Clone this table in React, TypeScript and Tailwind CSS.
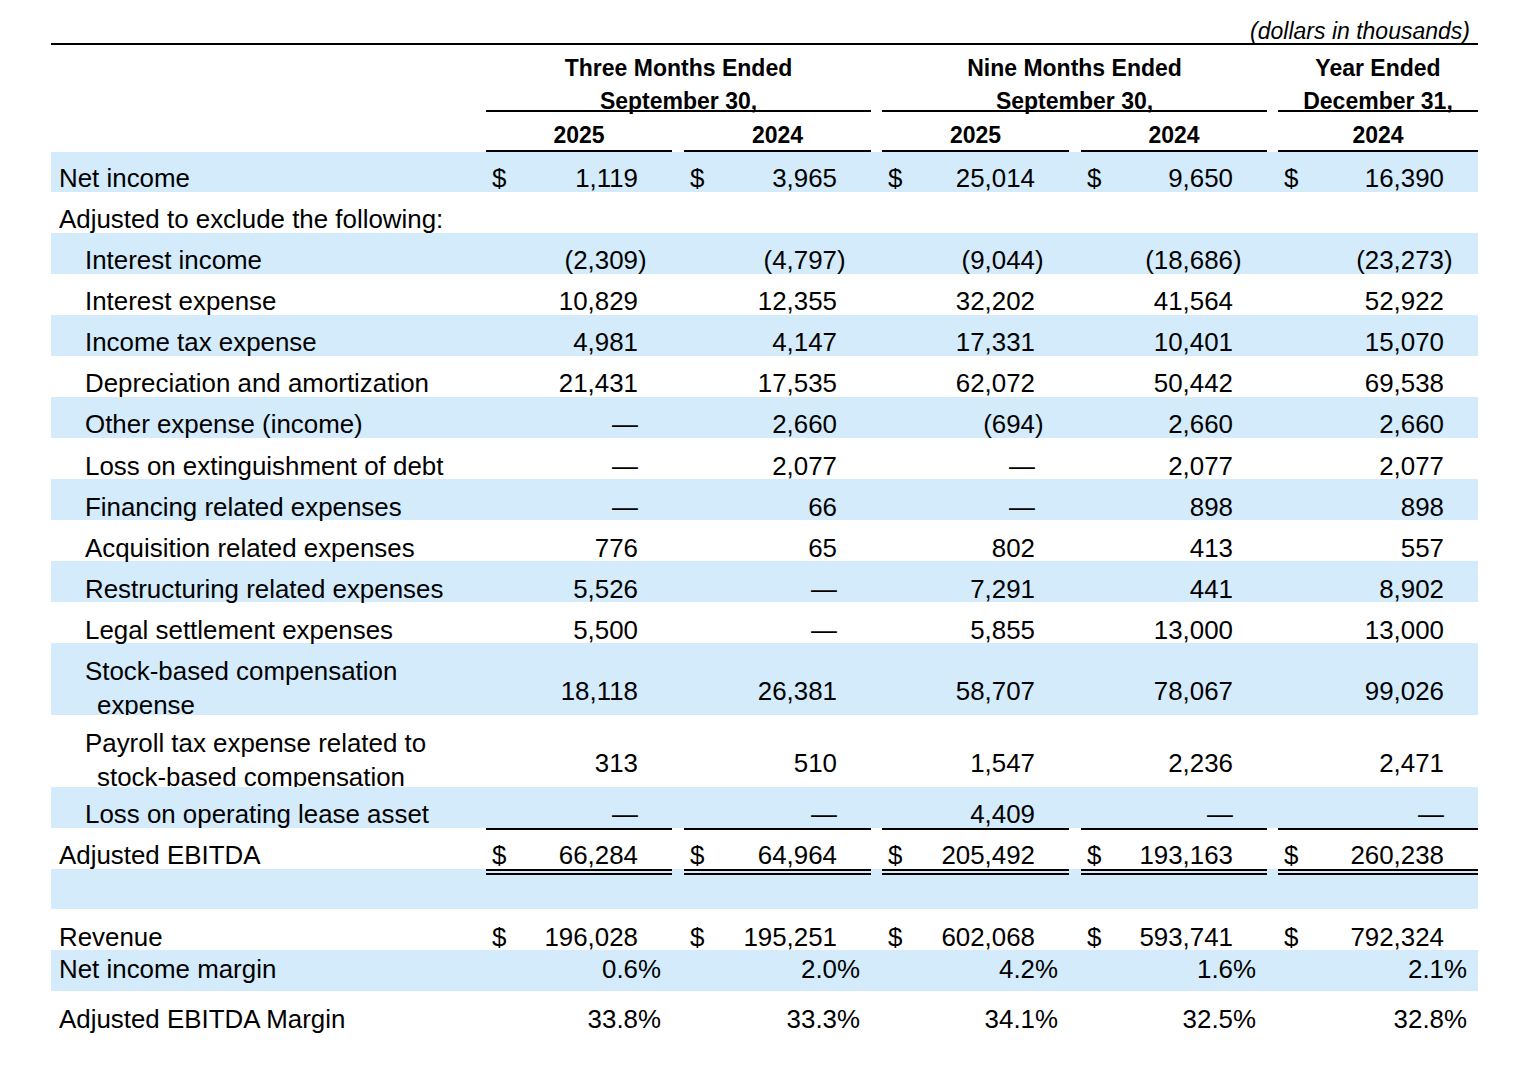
import { Fragment } from "react";

const COLS =
  "grid grid-cols-[435px_186px_12px_187px_11px_187px_12px_186px_11px_200px]";

type Row = {
  label: string[];
  indent?: boolean;
  vals?: string[];
  dollar?: boolean;
  blue?: boolean;
  h: string;
  pb: string;
  valBorder?: string;
};

const rows: Row[] = [
  { label: ["Net income"], vals: ["1,119", "3,965", "25,014", "9,650", "16,390"], dollar: true, blue: true, h: "h-[40px]", pb: "pb-[2px]" },
  { label: ["Adjusted to exclude the following:"], h: "h-[41px]", pb: "pb-[2px]" },
  { label: ["Interest income"], indent: true, vals: ["(2,309)", "(4,797)", "(9,044)", "(18,686)", "(23,273)"], blue: true, h: "h-[41px]", pb: "pb-[2px]" },
  { label: ["Interest expense"], indent: true, vals: ["10,829", "12,355", "32,202", "41,564", "52,922"], h: "h-[41px]", pb: "pb-[2px]" },
  { label: ["Income tax expense"], indent: true, vals: ["4,981", "4,147", "17,331", "10,401", "15,070"], blue: true, h: "h-[41px]", pb: "pb-[2px]" },
  { label: ["Depreciation and amortization"], indent: true, vals: ["21,431", "17,535", "62,072", "50,442", "69,538"], h: "h-[41px]", pb: "pb-[2px]" },
  { label: ["Other expense (income)"], indent: true, vals: ["—", "2,660", "(694)", "2,660", "2,660"], blue: true, h: "h-[41px]", pb: "pb-[2px]" },
  { label: ["Loss on extinguishment of debt"], indent: true, vals: ["—", "2,077", "—", "2,077", "2,077"], h: "h-[41px]", pb: "pb-[1px]" },
  { label: ["Financing related expenses"], indent: true, vals: ["—", "66", "—", "898", "898"], blue: true, h: "h-[41px]", pb: "pb-[1px]" },
  { label: ["Acquisition related expenses"], indent: true, vals: ["776", "65", "802", "413", "557"], h: "h-[41px]", pb: "pb-[1px]" },
  { label: ["Restructuring related expenses"], indent: true, vals: ["5,526", "—", "7,291", "441", "8,902"], blue: true, h: "h-[41px]", pb: "pb-[1px]" },
  { label: ["Legal settlement expenses"], indent: true, vals: ["5,500", "—", "5,855", "13,000", "13,000"], h: "h-[41px]", pb: "pb-[1px]" },
  { label: ["Stock-based compensation", "expense"], indent: true, vals: ["18,118", "26,381", "58,707", "78,067", "99,026"], blue: true, h: "h-[72px]", pb: "pb-[12px]" },
  { label: ["Payroll tax expense related to", "stock-based compensation"], indent: true, vals: ["313", "510", "1,547", "2,236", "2,471"], h: "h-[72px]", pb: "pb-[12px]" },
  { label: ["Loss on operating lease asset"], indent: true, vals: ["—", "—", "4,409", "—", "—"], blue: true, h: "h-[41px]", pb: "pb-[2px]" },
  { label: ["Adjusted EBITDA"], vals: ["66,284", "64,964", "205,492", "193,163", "260,238"], dollar: true, h: "h-[41px]", pb: "pb-[2px]", valBorder: "border-t-2 border-black" },
  { label: [], vals: ["", "", "", "", ""], blue: true, h: "h-[40px]", pb: "pb-0", valBorder: "border-t-[6px] border-double border-black" },
  { label: ["Revenue"], vals: ["196,028", "195,251", "602,068", "593,741", "792,324"], dollar: true, h: "h-[41px]", pb: "pb-[1px]" },
  { label: ["Net income margin"], vals: ["0.6%", "2.0%", "4.2%", "1.6%", "2.1%"], blue: true, h: "h-[41px]", pb: "pb-[10px]" },
  { label: ["Adjusted EBITDA Margin"], vals: ["33.8%", "33.3%", "34.1%", "32.5%", "32.8%"], h: "h-[41px]", pb: "pb-[1px]" },
];

function Num({ v }: { v: string }) {
  if (v.startsWith("(")) {
    return (
      <>
        {v.slice(0, -1)}
        <span className="mr-[-0.333em]">)</span>
      </>
    );
  }
  if (v.endsWith("%")) {
    return (
      <>
        {v.slice(0, -1)}
        <span className="mr-[-0.889em]">%</span>
      </>
    );
  }
  return <>{v}</>;
}

function Label({ row }: { row: Row }) {
  if (row.label.length === 2) {
    return (
      <div className="overflow-hidden whitespace-nowrap pt-[11px] leading-[34px]">
        <div className="pl-[34px]">{row.label[0]}</div>
        <div className="pl-[46px]">{row.label[1]}</div>
      </div>
    );
  }
  return (
    <div
      className={`flex items-end whitespace-nowrap ${row.indent ? "pl-[34px]" : "pl-[8px]"} ${row.pb}`}
    >
      {row.label[0]}
    </div>
  );
}

function DataRow({ row }: { row: Row }) {
  const vals = row.vals ?? [];
  return (
    <div className={`${COLS} ${row.h} ${row.blue ? "bg-[#d3ebfb]" : ""}`}>
      <Label row={row} />
      {[0, 1, 2, 3, 4].map((i) => (
        <Fragment key={i}>
          <div
            className={`flex items-end justify-between whitespace-nowrap pl-[6px] pr-[34px] ${row.pb} ${row.valBorder ?? ""}`}
          >
            <span>{row.dollar ? "$" : ""}</span>
            <span>{vals[i] ? <Num v={vals[i]} /> : null}</span>
          </div>
          {i < 4 && <div />}
        </Fragment>
      ))}
    </div>
  );
}

function Header() {
  const groups = [
    ["Three Months Ended", "September 30,"],
    ["Nine Months Ended", "September 30,"],
    ["Year Ended", "December 31,"],
  ];
  return (
    <div className="text-[23px] font-bold leading-[33px]">
      <div className="flex h-[43px] items-end justify-end pr-[8px] font-normal italic leading-[24px]">
        (dollars in thousands)
      </div>
      <div className={`${COLS} border-t-2 border-black`}>
        <div />
        <div className="col-span-3 h-[67px] border-b-2 border-black pt-[7px] text-center">
          <div>{groups[0][0]}</div>
          <div>{groups[0][1]}</div>
        </div>
        <div />
        <div className="col-span-3 h-[67px] border-b-2 border-black pt-[7px] text-center">
          <div>{groups[1][0]}</div>
          <div>{groups[1][1]}</div>
        </div>
        <div />
        <div className="h-[67px] border-b-2 border-black pt-[7px] text-center">
          <div>{groups[2][0]}</div>
          <div>{groups[2][1]}</div>
        </div>
      </div>
      <div className={COLS}>
        <div />
        <div className="h-[40px] border-b-2 border-black pt-[7px] text-center">2025</div>
        <div />
        <div className="h-[40px] border-b-2 border-black pt-[7px] text-center">2024</div>
        <div />
        <div className="h-[40px] border-b-2 border-black pt-[7px] text-center">2025</div>
        <div />
        <div className="h-[40px] border-b-2 border-black pt-[7px] text-center">2024</div>
        <div />
        <div className="h-[40px] border-b-2 border-black pt-[7px] text-center">2024</div>
      </div>
    </div>
  );
}

export default function App() {
  return (
    <div className="min-h-[1068px] w-[1528px] bg-white font-['Liberation_Sans',Arial,sans-serif] text-black">
      <div className="ml-[51px] w-[1427px] text-[25.9px] leading-[23px]">
        <Header />
        {rows.map((row, i) => (
          <DataRow key={i} row={row} />
        ))}
      </div>
    </div>
  );
}
